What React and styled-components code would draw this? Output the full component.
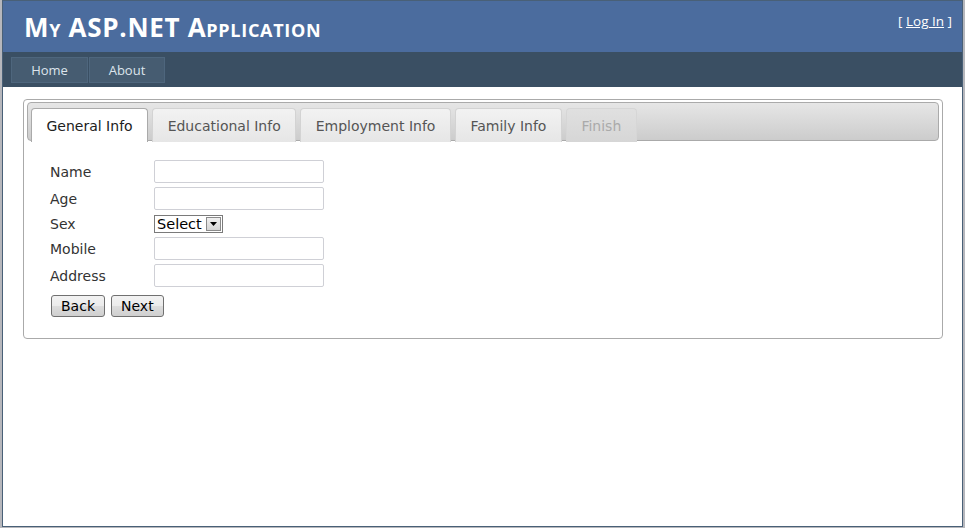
import { useState } from "react";
import styled, { createGlobalStyle, css } from "styled-components";

const GlobalStyle = createGlobalStyle`
  html, body {
    margin: 0;
    padding: 0;
    background: #b6b7bc;
  }
  body {
    padding-left: 2px;
    font-family: "DejaVu Sans", Verdana, sans-serif;
  }
`;

const Page = styled.div`
  width: 959px;
  height: 525px;
  background: #fff;
  border: 1px solid #496077;
  display: flex;
  flex-direction: column;
`;

const Header = styled.div`
  height: 51px;
  background: #4b6c9e;
  display: flex;
  justify-content: space-between;
  align-items: flex-start;
  padding: 0 10px 0 21px;
`;

const Title = styled.h1`
  margin: 10px 0 0;
  font-family: "Open Sans", "Liberation Sans", sans-serif;
  font-size: 26px;
  font-weight: 700;
  font-variant: small-caps;
  color: #fff;
  line-height: 32px;
  letter-spacing: 0.7px;
`;

const LoginDisplay = styled.div`
  margin-top: 11px;
  font-family: "Open Sans", "Liberation Sans", sans-serif;
  font-size: 13.5px;
  color: #fff;

  a {
    color: #fff;
    text-decoration: underline;
  }
`;

const MenuBar = styled.div`
  height: 35px;
  background: #3a4f63;
  display: flex;
  align-items: flex-start;
  padding: 5px 0 0 8px;
  box-sizing: border-box;
`;

const MenuItem = styled.a`
  width: ${(props) => props.w}px;
  height: 26px;
  box-sizing: border-box;
  background: #465c71;
  border: 1px solid #4e667d;
  display: flex;
  align-items: center;
  justify-content: center;
  font-family: "Open Sans", "Liberation Sans", sans-serif;
  font-size: 13px;
  color: #dde4ec;
  text-decoration: none;
  cursor: pointer;
  & + & {
    margin-left: 1px;
  }
`;

const Main = styled.div`
  padding: 12px 20px;
`;

const Tabs = styled.div`
  width: 920px;
  box-sizing: border-box;
  border: 1px solid #aaa;
  border-radius: 4px;
  padding: 2px 3px 3px;
  background: #fff;
`;

const TabNav = styled.ul`
  margin: 0;
  list-style: none;
  display: flex;
  gap: 4px;
  height: 39px;
  box-sizing: border-box;
  padding: 5px 3px 0;
  border: 1px solid #aaa;
  border-radius: 4px;
  background: linear-gradient(#e6e6e6, #cccccc);
`;

const Tab = styled.li`
  height: 34px;
  box-sizing: border-box;
  padding: 0 14.5px;
  border: 1px solid #d3d3d3;
  border-bottom: none;
  border-radius: 4px 4px 0 0;
  background: linear-gradient(#f2f2f2, #e6e6e6);
  display: flex;
  align-items: center;
  font-size: 14px;
  color: #555;
  cursor: pointer;
  ${(props) =>
    props.active &&
    css`
      background: #fff;
      border-color: #aaa;
      color: #212121;
      position: relative;
      z-index: 1;
    `}
  ${(props) =>
    props.disabled &&
    css`
      color: #aaa;
      background: linear-gradient(#e0e0e0, #d6d6d6);
      border-color: #d6d6d6;
      cursor: default;
    `}
`;

const Panel = styled.div`
  padding: 17px 23px 18px;
`;

const FormRow = styled.div`
  display: flex;
  align-items: center;
  height: ${(props) => props.h || 27}px;
`;

const Label = styled.label`
  width: 104px;
  font-size: 14px;
  color: #333;
`;

const TextInput = styled.input`
  width: 170px;
  height: 23px;
  box-sizing: border-box;
  border: 1px solid #cfd0d6;
  border-radius: 2px;
  padding: 2px 4px;
  font-size: 14px;
  font-family: "DejaVu Sans", Verdana, sans-serif;
  outline: none;
`;

const SelectBox = styled.div`
  display: flex;
  align-items: center;
  width: 69px;
  height: 18px;
  box-sizing: border-box;
  border: 1px solid #7a7a7a;
  background: #fff;
`;

const SelectField = styled.select`
  appearance: none;
  border: none;
  background: transparent;
  font-family: "DejaVu Sans", Verdana, sans-serif;
  font-size: 14.5px;
  color: #000;
  padding: 0 0 0 2px;
  width: 51px;
  height: 16px;
  line-height: 16px;
  outline: none;
`;

const SelectArrow = styled.span`
  width: 15px;
  height: 14px;
  box-sizing: border-box;
  border: 1px solid #8a8a8a;
  background: linear-gradient(#f0f0f0, #d4d4d4);
  display: flex;
  align-items: center;
  justify-content: center;
  margin-left: auto;
  margin-right: 1px;
`;

const Buttons = styled.div`
  display: flex;
  gap: 6px;
  padding: 6px 0 0 1px;
`;

const Button = styled.button`
  height: 22px;
  box-sizing: border-box;
  padding: 0 9px;
  border: 1px solid #707070;
  border-radius: 3px;
  background: linear-gradient(#f2f2f2 0%, #ebebeb 50%, #dddddd 51%, #cfcfcf 100%);
  font-family: "DejaVu Sans", Verdana, sans-serif;
  font-size: 14px;
  color: #000;
  cursor: pointer;
`;

const tabs = [
  "General Info",
  "Educational Info",
  "Employment Info",
  "Family Info",
  "Finish",
];

const App = () => {
  const [active, setActive] = useState(0);

  return (
    <>
      <GlobalStyle />
      <Page>
        <Header>
          <Title>My ASP.NET Application</Title>
          <LoginDisplay>
            [ <a>Log In</a> ]
          </LoginDisplay>
        </Header>
        <MenuBar>
          <MenuItem w={77}>Home</MenuItem>
          <MenuItem w={76}>About</MenuItem>
        </MenuBar>
        <Main>
          <Tabs>
            <TabNav>
              {tabs.map((t, i) => (
                <Tab
                  key={t}
                  active={i === active}
                  disabled={i === 4}
                  onClick={() => i !== 4 && setActive(i)}
                >
                  {t}
                </Tab>
              ))}
            </TabNav>
            <Panel>
              <FormRow>
                <Label>Name</Label>
                <TextInput />
              </FormRow>
              <FormRow>
                <Label>Age</Label>
                <TextInput />
              </FormRow>
              <FormRow h={23}>
                <Label>Sex</Label>
                <SelectBox>
                  <SelectField>
                    <option>Select</option>
                    <option>Male</option>
                    <option>Female</option>
                  </SelectField>
                  <SelectArrow>
                    <svg width="7" height="4" viewBox="0 0 7 4">
                      <path d="M0 0h7L3.5 4z" fill="#000" />
                    </svg>
                  </SelectArrow>
                </SelectBox>
              </FormRow>
              <FormRow>
                <Label>Mobile</Label>
                <TextInput />
              </FormRow>
              <FormRow>
                <Label>Address</Label>
                <TextInput />
              </FormRow>
              <Buttons>
                <Button>Back</Button>
                <Button>Next</Button>
              </Buttons>
            </Panel>
          </Tabs>
        </Main>
      </Page>
    </>
  );
};

export default App;
